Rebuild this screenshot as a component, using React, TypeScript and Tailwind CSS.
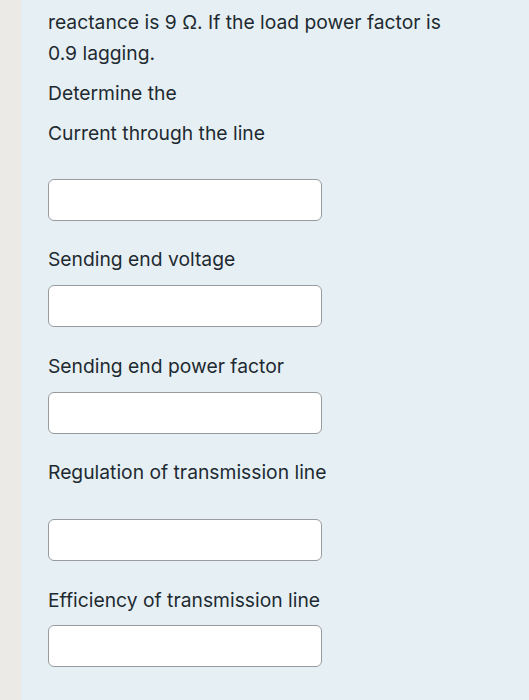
export default function App() {
  const box = "w-[274px] h-[42px] rounded-[6px] border-[1.5px] border-[#979b9e] bg-white";
  const label = "leading-[31px]";
  return (
    <div
      className="flex min-h-[700px] w-full text-[19.3px] text-[#1e2a31]"
      style={{ fontFamily: "Inter, 'Liberation Sans', sans-serif" }}
    >
      <div className="w-[21px] shrink-0 bg-[#ebeae6]" />
      <div className="flex-1 bg-[#e6f0f4] pl-[27px] pt-[7px] flex flex-col items-start">
        <p className={label}>
          reactance is 9 Ω. If the load power factor is
          <br />
          0.9 lagging.
        </p>
        <p className={`${label} mt-[9px]`}>Determine the</p>
        <p className={`${label} mt-[9px]`}>Current through the line</p>
        <div className={`${box} mt-[30px]`} />
        <p className={`${label} mt-[23px]`}>Sending end voltage</p>
        <div className={`${box} mt-[10px]`} />
        <p className={`${label} mt-[24px]`}>Sending end power factor</p>
        <div className={`${box} mt-[10px]`} />
        <p className={`${label} mt-[23px]`}>Regulation of transmission line</p>
        <div className={`${box} mt-[31px]`} />
        <p className={`${label} mt-[24px]`}>Efficiency of transmission line</p>
        <div className={`${box} mt-[9px]`} />
      </div>
    </div>
  );
}
